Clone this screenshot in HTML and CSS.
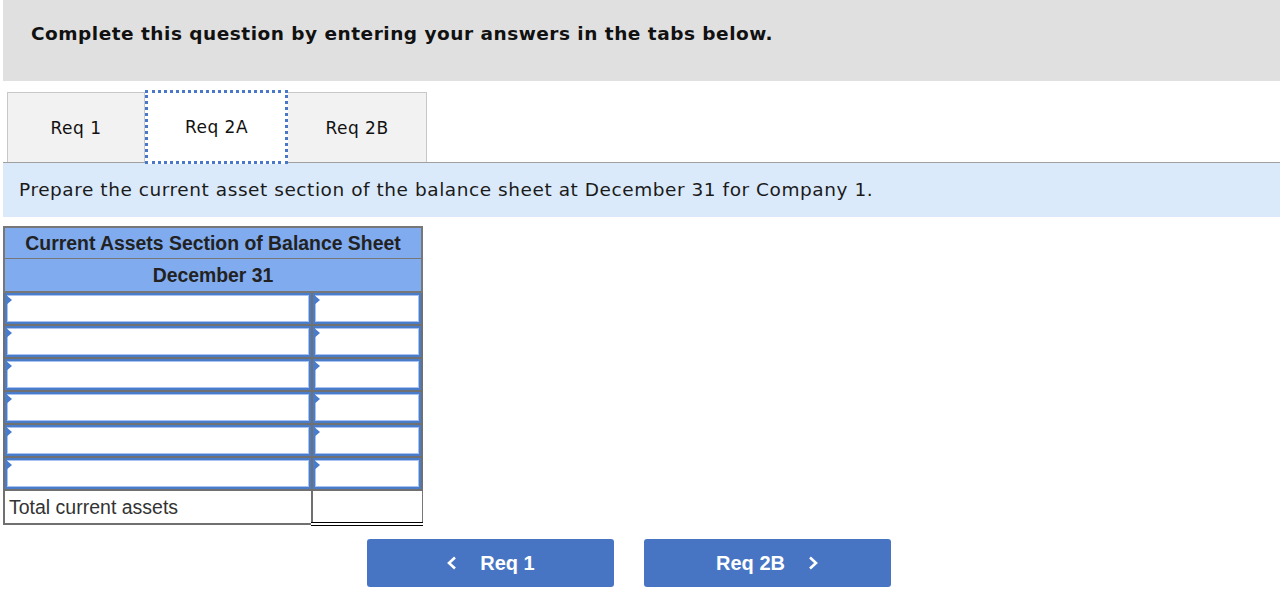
FILE: index.html
```html
<!DOCTYPE html>
<html>
<head>
<meta charset="utf-8">
<link rel="stylesheet" href="styles.css">
</head>
<body>
<div class="page">
  <div class="header">Complete this question by entering your answers in the tabs below.</div>
  <div class="tabs">
    <div class="tab">Req 1</div>
    <div class="tab active">Req 2A</div>
    <div class="tab">Req 2B</div>
  </div>
  <div class="instr">Prepare the current asset section of the balance sheet at December 31 for Company 1.</div>
  <table class="sheet">
    <tr><th colspan="2" class="h1">Current Assets Section of Balance Sheet</th></tr>
    <tr><th colspan="2" class="h2">December 31</th></tr>
    <tr class="in"><td class="lc"><div class="box"></div></td><td class="rc"><div class="box"></div></td></tr>
    <tr class="in"><td class="lc"><div class="box"></div></td><td class="rc"><div class="box"></div></td></tr>
    <tr class="in"><td class="lc"><div class="box"></div></td><td class="rc"><div class="box"></div></td></tr>
    <tr class="in"><td class="lc"><div class="box"></div></td><td class="rc"><div class="box"></div></td></tr>
    <tr class="in"><td class="lc"><div class="box"></div></td><td class="rc"><div class="box"></div></td></tr>
    <tr class="in"><td class="lc"><div class="box"></div></td><td class="rc"><div class="box"></div></td></tr>
    <tr class="total"><td class="tl">Total current assets</td><td class="tr"></td></tr>
  </table>
  <div class="nav">
    <button class="btn prev"><svg class="chev" width="12" height="14" viewBox="0 0 12 14"><polyline points="9,1.5 3,7 9,12.5" fill="none" stroke="#fff" stroke-width="2.6"/></svg><span>Req 1</span></button>
    <button class="btn next"><span>Req 2B</span><svg class="chev" width="12" height="14" viewBox="0 0 12 14"><polyline points="3,1.5 9,7 3,12.5" fill="none" stroke="#fff" stroke-width="2.6"/></svg></button>
  </div>
</div>
</body>
</html>
```
FILE: styles.css
```css
html, body { margin: 0; padding: 0; background: #fff; }
.page { padding: 0 3px; font-family: "DejaVu Sans", Verdana, sans-serif; color: #111; }
.header {
  background: #e0e0e0;
  height: 81px;
  box-sizing: border-box;
  padding: 23px 0 0 28px;
  font-weight: bold;
  font-size: 18.5px;
  line-height: 22px;
  letter-spacing: 0.5px;
}
.tabs {
  display: flex;
  margin-top: 11px;
  padding-left: 4px;
  height: 70px;
  border-bottom: 1px solid #a0a0a0;
}
.tab {
  box-sizing: border-box;
  width: 138px;
  height: 70px;
  background: #f2f2f2;
  border: 1px solid #c8c8c8;
  border-bottom: none;
  display: flex;
  align-items: center;
  justify-content: center;
  font-size: 17px;
  letter-spacing: 0.5px;
  color: #111;
}
.tab.active {
  width: 143px;
  background: #fff;
  border: 3px dotted #4a78c8;
  height: 74px;
  margin-top: -2px;
  margin-bottom: -2px;
  position: relative;
  z-index: 1;
}
.tab:last-child { width: 139px; border-left: none; }
.instr {
  background: #dbeafb;
  height: 54px;
  box-sizing: border-box;
  padding: 16px 0 0 16px;
  font-size: 18.5px;
  line-height: 22px;
  letter-spacing: 0.55px;
  color: #1a1a1a;
}
.sheet {
  margin-top: 9px;
  border-collapse: collapse;
  width: 420px;
  font-family: "Liberation Sans", Arial, sans-serif;
}
.sheet th {
  background: #80abee;
  border: 2px solid #777;
  font-size: 19.4px;
  color: #222;
  padding: 0;
  text-align: center;
}
.sheet .h1 { height: 30px; border-bottom-width: 1px; }
.sheet .h2 { height: 32px; border-top-width: 1px; }
.sheet td { padding: 0; border: 2px solid #707070; }
.sheet tr.in td { height: 31px; }
.lc { width: 306px; }
.box {
  position: relative;
  box-sizing: border-box;
  height: 31px;
  border: 2px solid #4a7ccc;
  background: #fff;
  box-shadow: inset 0 0 0 1px #a9c3ee;
}
.box::before {
  content: "";
  position: absolute;
  z-index: 2;
  left: -2px;
  top: -1px;
  width: 0;
  height: 0;
  border-left: 7px solid #4a7ccc;
  border-top: 6px solid transparent;
  border-bottom: 6px solid transparent;
}
.total td { height: 31px; }
.tl {
  font-size: 19.5px;
  color: #333;
  padding-left: 4px !important;
  border-right: 1px solid #777 !important;
}
.tr {
  border-top: 2px solid #000 !important;
  border-bottom: 4px double #000 !important;
  border-right: 1px solid #777 !important;
}
.nav {
  display: flex;
  gap: 30px;
  margin: 13px 0 0 364px;
}
.btn {
  width: 247px;
  height: 48px;
  background: #4775c3;
  border: none;
  border-radius: 3px;
  color: #fff;
  font-family: "Liberation Sans", Arial, sans-serif;
  font-weight: bold;
  font-size: 20px;
  display: flex;
  align-items: center;
  justify-content: center;
  gap: 22px;
  padding: 0;
}
.chev { display: block; }
```
